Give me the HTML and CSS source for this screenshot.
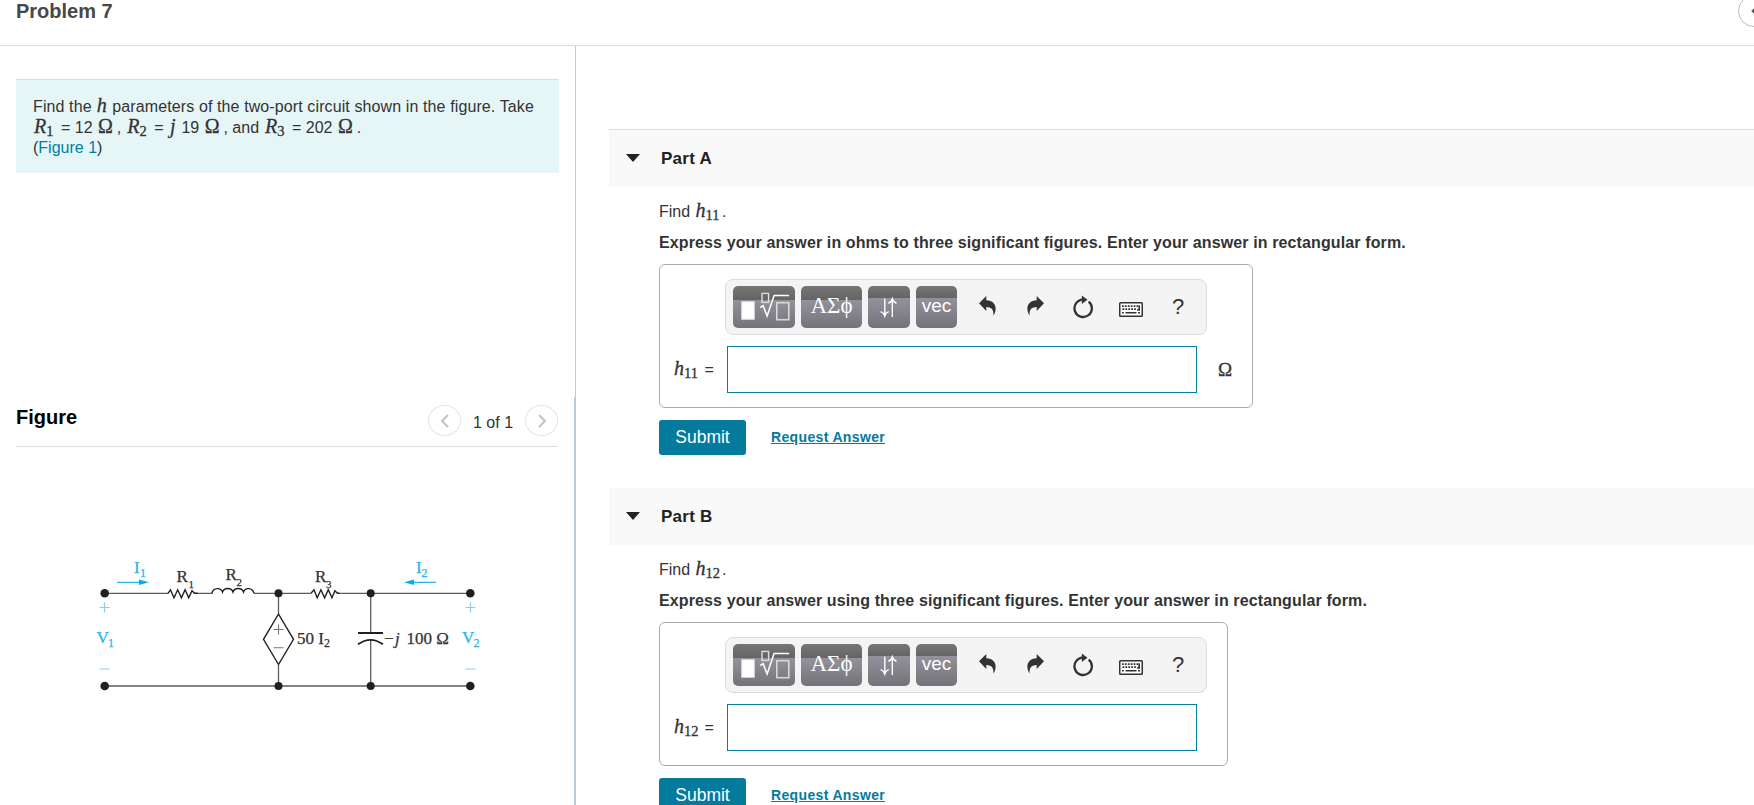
FILE: index.html
```html
<!DOCTYPE html>
<html lang="en">
<head>
<meta charset="utf-8">
<title>Problem 7</title>
<link rel="stylesheet" href="styles.css">
</head>
<body>
<svg class="defs" width="0" height="0" aria-hidden="true">
  <symbol id="i-root" viewBox="0 0 62 42">
    <rect x="8.7" y="15.7" width="12.6" height="17.6" fill="#fff" stroke="#ddd"/>
    <rect x="29" y="7.4" width="6.6" height="9" fill="none" stroke="#ddd" stroke-width="1.4"/>
    <path d="M27.300 21.500l2.800-1.800 4 10.300 7-20.500h15" fill="none" stroke="#fff" stroke-width="1.500"/>
    <rect x="43.800" y="16.700" width="12" height="17" fill="none" stroke="#d8d8d8" stroke-width="1.600"/>
  </symbol>
  <symbol id="i-swap" viewBox="0 0 42 42">
    <path d="M16.800 12.500v17.300M12.600 25.600q3 .8 4.200 4.400q1-3.600 4-4.400M24.300 31V13M20.300 17.200q3-.8 4-4.400q1.200 3.600 4.200 4.400" fill="none" stroke="#fff" stroke-width="1.400"/>
  </symbol>
  <symbol id="i-undo" viewBox="0 0 17 20">
    <path d="M0 7.300L7.300 0v4.200C13.500 4.400 17 8 16.600 13.200c-.2 2.600-1 4.700-2.200 6.300C14.800 14 13 11.200 7.300 11v4z" fill="#333"/>
  </symbol>
  <symbol id="i-reset" viewBox="0 0 22 24">
    <path d="M15.700 5.800A8.700 8.700 0 1 1 9.600 4.700" fill="none" stroke="#333" stroke-width="2.300" transform="rotate(8 11 13)"/>
    <path d="M9.800 0.500L15.500 4.800 9.800 9z" fill="#333"/>
  </symbol>
  <symbol id="i-keys" viewBox="0 0 24 15">
    <rect x=".75" y=".75" width="22.500" height="13.500" rx=".8" fill="#fff" stroke="#333" stroke-width="1.500"/>
    <path d="M3 4.200h18M3.500 7.200h14.500" stroke="#333" stroke-width="1.700" stroke-dasharray="1.800 1.100"/>
    <path d="M20.200 3.500v4.400h-2M6.500 10.800h11M3 10.800h1.800M19 10.800h2" fill="none" stroke="#333" stroke-width="1.600"/>
  </symbol>
</svg>

<header class="topbar">
  <h1>Problem 7</h1>
  <span class="back"><svg width="8" height="12" viewBox="0 0 8 12"><path d="M6.500 1.500L2 6l4.500 4.500" fill="none" stroke="#505759" stroke-width="2.400"/></svg></span>
</header>

<main class="columns">
  <section class="left">
    <div class="statement">
      <div class="line loose">Find the <i class="m w-h">h</i> parameters of the two-port circuit shown in the figure. Take</div>
      <div class="line"><span class="m w-r"><i>R</i><sub>1</sub></span> = 12 <span class="m w-o">Ω</span> , <span class="m w-r2"><i>R</i><sub>2</sub></span> = <i class="m w-j">j</i> 19 <span class="m w-o">Ω</span> , and <span class="m w-r2"><i>R</i><sub>3</sub></span> = 202 <span class="m w-o">Ω</span> .</div>
      <div class="line">(<a>Figure 1</a>)</div>
    </div>
    <div class="figure-pane">
      <div class="figure-head">
        <h2>Figure</h2>
        <div class="pager">
          <span class="round"><svg width="10" height="14" viewBox="0 0 10 14"><path d="M8 1L2 7l6 6"/></svg></span>
          <span class="count">1 of 1</span>
          <span class="round"><svg width="10" height="14" viewBox="0 0 10 14"><path d="M2 1l6 6-6 6"/></svg></span>
        </div>
      </div>
      <svg class="circuit" width="410" height="160" viewBox="80 540 410 160">
        <g fill="none" stroke="#5c5c5c" stroke-width="1.300">
          <path d="M104.700 593.300H168M196 593.300H212.500M254 593.300H311M337 593.300H470.300M104.700 686H470.300"/>
          <path d="M278.500 593.300V614M278.500 665V686M370.700 593.300V633M370.700 640V686"/>
        </g>
        <g fill="none" stroke="#231f20" stroke-width="1.400">
          <path d="M168 593.300l2.500-3.500 3.500 8 3.700-8 3.700 8 3.700-8 3.600 8 3.300-7 2.500 2.500h3"/>
          <path d="M212 593.300c1-6 9-6 10.500-1.300c1.500-4.700 9-4.700 10.500 0c1.500-4.700 9-4.700 10.500 0c1.500-4.700 9-4.700 10.500 1.300"/>
          <path d="M311 593.300l3-3.500 3.200 8 3.700-8 3.700 8 3.700-8 3.600 8 3-7 2.500 2.500h2"/>
          <path d="M278.500 614l15 25.300-15 25.200-15-25.200z"/>
          <path d="M358 633h25" stroke-width="2"/>
          <path d="M358 644.300q12.500-9 25 0" stroke-width="1.800"/>
        </g>
        <g fill="none" stroke="#777" stroke-width="1.100">
          <path d="M273.500 629.500h10M278.500 624.500v10M273.500 647.700h10"/>
        </g>
        <g fill="#231f20">
          <circle cx="104.700" cy="593.300" r="4.300"/><circle cx="278.500" cy="593.300" r="4"/><circle cx="370.700" cy="593.300" r="4"/><circle cx="470.300" cy="593.300" r="4.300"/>
          <circle cx="104.700" cy="686" r="4.300"/><circle cx="278.500" cy="686" r="4"/><circle cx="370.700" cy="686" r="4"/><circle cx="470.300" cy="686" r="4.300"/>
        </g>
        <g stroke="#7fd0f3" stroke-width="1.200">
          <path d="M99.500 607.500h10M104.500 602.500v10M99.500 669h10M465.500 607.500h10M470.500 602.500v10M465.500 669h10"/>
        </g>
        <g stroke="#2ab4ee" stroke-width="1.200" fill="#00aeef">
          <path d="M117 582.300h24M412 582.300h24"/>
          <path d="M139 579.500l10 2.800-10 2.800zM414 579.500l-10 2.800 10 2.800z" stroke="none"/>
        </g>
        <g class="cyan">
          <text x="134" y="573" font-size="17">I</text><text x="140" y="576.500" font-size="12">1</text>
          <text x="96.500" y="643" font-size="17">V</text><text x="108" y="646.500" font-size="12">1</text>
          <text x="416" y="573" font-size="17">I</text><text x="421.500" y="576.500" font-size="12">2</text>
          <text x="462" y="643" font-size="17">V</text><text x="473.500" y="646.500" font-size="12">2</text>
        </g>
        <g class="ink">
          <text x="176.500" y="581.500" font-size="17">R</text><text x="188.500" y="587.500" font-size="11">1</text>
          <text x="225.500" y="580" font-size="17">R</text><text x="236.500" y="586" font-size="11">2</text>
          <text x="315" y="581.500" font-size="17">R</text><text x="326" y="587.500" font-size="11">3</text>
          <text x="297" y="643.500" font-size="17">50 I</text><text x="324" y="646.500" font-size="12">2</text>
          <text x="384" y="643.500" font-size="17">−</text><text x="395" y="643.500" font-size="17" font-style="italic">j</text>
          <text x="406.500" y="643.500" font-size="17">100 Ω</text>
        </g>
      </svg>
    </div>
  </section>

  <section class="right">
    <article class="part first">
      <div class="part-head"><span class="caret"></span><h3>Part A</h3></div>
      <div class="part-body">
        <p class="find">Find <span class="m w-hh"><i>h</i><sub>11</sub></span>.</p>
        <p class="express">Express your answer in ohms to three significant figures. Enter your answer in rectangular form.</p>
        <div class="answer wide">
          <div class="toolbar">
            <span class="key k-root"><svg width="62" height="42"><use href="#i-root"/></svg></span>
            <span class="key k-greek">ΑΣϕ</span>
            <span class="key k-swap"><svg width="42" height="42"><use href="#i-swap"/></svg></span>
            <span class="key k-vec">vec</span>
            <span class="tool"><svg class="arrow" width="17" height="20"><use href="#i-undo"/></svg></span>
            <span class="tool"><svg class="arrow flip" width="17" height="20"><use href="#i-undo"/></svg></span>
            <span class="tool"><svg class="reset" width="22" height="24"><use href="#i-reset"/></svg></span>
            <span class="tool"><svg class="keys" width="24" height="15"><use href="#i-keys"/></svg></span>
            <span class="tool help">?</span>
          </div>
          <div class="entry"><span class="label"><span class="m w-hl"><i>h</i><sub>11</sub></span> =</span><span class="field"></span><span class="unit">Ω</span></div>
        </div>
        <div class="actions"><span class="submit">Submit</span><a class="request">Request Answer</a></div>
      </div>
    </article>
    <article class="part">
      <div class="part-head"><span class="caret"></span><h3>Part B</h3></div>
      <div class="part-body">
        <p class="find">Find <span class="m w-hh"><i>h</i><sub>12</sub></span>.</p>
        <p class="express">Express your answer using three significant figures. Enter your answer in rectangular form.</p>
        <div class="answer">
          <div class="toolbar">
            <span class="key k-root"><svg width="62" height="42"><use href="#i-root"/></svg></span>
            <span class="key k-greek">ΑΣϕ</span>
            <span class="key k-swap"><svg width="42" height="42"><use href="#i-swap"/></svg></span>
            <span class="key k-vec">vec</span>
            <span class="tool"><svg class="arrow" width="17" height="20"><use href="#i-undo"/></svg></span>
            <span class="tool"><svg class="arrow flip" width="17" height="20"><use href="#i-undo"/></svg></span>
            <span class="tool"><svg class="reset" width="22" height="24"><use href="#i-reset"/></svg></span>
            <span class="tool"><svg class="keys" width="24" height="15"><use href="#i-keys"/></svg></span>
            <span class="tool help">?</span>
          </div>
          <div class="entry"><span class="label"><span class="m w-hl"><i>h</i><sub>12</sub></span> =</span><span class="field"></span></div>
        </div>
        <div class="actions"><span class="submit">Submit</span><a class="request">Request Answer</a></div>
      </div>
    </article>
  </section>
</main>
</body>
</html>
```

FILE: styles.css
```css
* { box-sizing: border-box; }
body {
  margin: 0;
  height: 805px;
  overflow: hidden;
  background: #fff;
  color: #333;
  font: 16px/20.5px "Liberation Sans", Arial, sans-serif;
}
h1, h2, h3, p { margin: 0; }
svg { display: block; }
.defs { position: absolute; }

.topbar {
  display: flex;
  justify-content: space-between;
  height: 46px;
  padding-left: 16px;
  border-bottom: 1px solid #dcdcdc;
  overflow: hidden;
}
.topbar h1 { font-size: 20px; line-height: 22px; color: #484848; }
.back {
  flex: none;
  width: 32px;
  height: 32px;
  margin: -5.5px -16px 0 0;
  padding: 9.5px 0 0 11.5px;
  border: 1px solid #bbb;
  border-radius: 50%;
}

.columns { display: flex; height: 759px; }
.left {
  width: 576px;
  display: flex;
  flex-direction: column;
  background:
    linear-gradient(#b8cce0, #b8cce0) 575px 0 / 1px 100% no-repeat,
    linear-gradient(#b8cce0, #b8cce0) 574px 351px / 1px 408px no-repeat;
}
.statement {
  width: 543px;
  height: 94px;
  margin: 33px 0 0 16px;
  padding: 17px 0 0 17px;
  border-top: 1px solid #d8dcdc;
  background: #e6f6f7;
}
.line { white-space: nowrap; height: 20.5px; }
.loose { letter-spacing: .11px; }
.line a { color: #007fa3; }

.m {
  display: inline-block;
  font-family: "Liberation Serif", serif;
  font-size: 20px;
  line-height: 0;
  letter-spacing: 0;
  white-space: nowrap;
  -webkit-text-stroke: .3px currentColor;
}
.m sub { font-size: 14.5px; line-height: 0; vertical-align: -3px; }
.w-h { width: 11.5px; padding-left: .5px; }
.w-r { width: 23.5px; padding-left: 1px; }
.w-r2 { width: 24px; padding-left: 1.5px; }
.w-o { width: 15.4px; padding-left: 1px; }
.w-j { width: 9px; padding-left: 2px; }
.w-hh { width: 27.5px; padding-left: 1px; }
.w-hl { width: 26px; }

.figure-pane { margin: 224px 0 0 16px; width: 542px; }
.figure-head {
  display: flex;
  justify-content: space-between;
  height: 50px;
  border-bottom: 1px solid #dcdcdc;
}
.figure-head h2 { font-size: 20px; line-height: 22px; color: #000; padding-top: 9px; }
.pager { display: flex; gap: 12px; padding-top: 8px; }
.round {
  display: flex;
  align-items: center;
  justify-content: center;
  width: 33px;
  height: 31px;
  border: 1px solid #e4e4e4;
  border-radius: 50%;
}
.round path { fill: none; stroke: #c2c2c2; stroke-width: 2; }
.count { padding-top: 8px; width: 40px; white-space: nowrap; }
.circuit { margin: 93px 0 0 64px; }
.circuit text { font-family: "Liberation Serif", serif; stroke-width: .25px; }
.cyan { fill: #2ab4ee; stroke: #2ab4ee; }
.ink { fill: #333; stroke: #333; }

.right { flex: 1; padding: 83px 0 0 33px; }
.part { height: 358px; }
.part-head {
  display: flex;
  align-items: center;
  height: 58px;
  padding-left: 17px;
  border-top: 1px solid #fff;
  background: #f9f9f9;
  background-clip: padding-box;
}
.first .part-head { border-top-color: #dcdcdc; }
.caret {
  border: 7px solid transparent;
  border-top: 8px solid #222;
  border-bottom: 0;
  margin-top: -1px;
}
.part-head h3 { margin-left: 21px; padding-top: 2px; font-size: 17px; letter-spacing: .25px; color: #222; }
.part-body { padding-left: 50px; }
.find { padding-top: 15px; height: 45px; }
.express { padding-top: 1px; font-weight: bold; letter-spacing: .12px; height: 32px; white-space: nowrap; }
.answer {
  width: 569px;
  height: 144px;
  padding: 14px 0 0 14px;
  border: 1px solid #aaa;
  border-radius: 6px;
}
.answer.wide { width: 594px; }
.toolbar {
  display: flex;
  width: 482px;
  height: 56px;
  margin-left: 51px;
  padding: 6px 0 0 7px;
  border: 1px solid #dcdcdc;
  border-radius: 8px;
  background: #f4f4f4;
}
.key {
  flex: none;
  height: 42px;
  margin-right: 6px;
  border-radius: 5px;
  color: #fff;
  text-align: center;
  background: linear-gradient(#767676, #646464 12px, #93919b 12px, #757379 42px);
}
.k-root, .k-greek { background: linear-gradient(#767676, #646464 14px, #93919b 14px, #757379 42px); }
.k-root { width: 62px; }
.k-greek { width: 61px; font: 23px/39px "Liberation Serif", serif; }
.k-swap { width: 42px; }
.k-vec { width: 41px; margin-right: 7px; font-size: 19px; line-height: 39px; }
.tool { flex: none; width: 47.6px; height: 42px; }
.tool svg { margin-left: auto; margin-right: auto; }
.arrow { margin-top: 10px; }
.arrow.flip { transform: scaleX(-1); }
.reset { margin-top: 9px; }
.keys { margin-top: 16px; }
.help { text-align: center; font-size: 22px; line-height: 41px; }
.entry { display: flex; align-items: center; margin-top: 11px; }
.label { width: 53px; white-space: nowrap; padding-top: 1px; }
.field { width: 470px; height: 47px; border: 1px solid #007fa3; }
.unit { margin-left: 21px; font: 19px/20px "Liberation Serif", serif; -webkit-text-stroke: .3px currentColor; }
.actions { display: flex; align-items: center; margin-top: 12px; }
.submit {
  width: 87px;
  height: 35px;
  border-radius: 3px;
  background: #047a9c;
  color: #fff;
  font-size: 17.5px;
  line-height: 34px;
  text-align: center;
}
.request {
  margin-left: 25px;
  color: #047a9c;
  font-size: 14px;
  font-weight: bold;
  letter-spacing: .35px;
  text-decoration: underline;
}
```
